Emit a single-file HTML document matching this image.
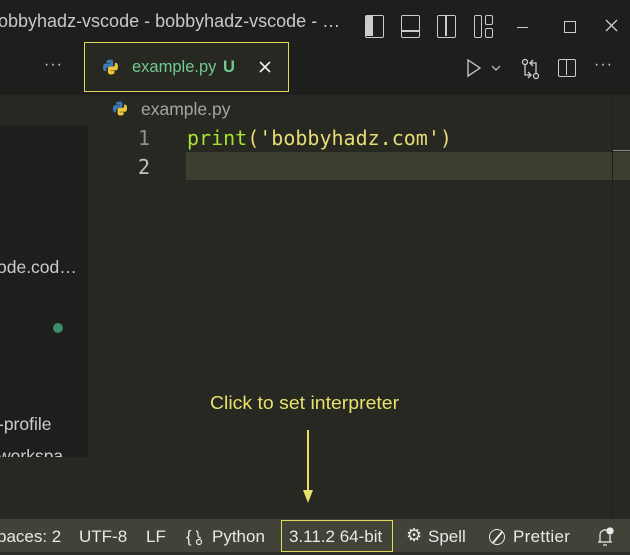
<!DOCTYPE html>
<html><head><style>
body{margin:0;width:630px;height:555px;background:#272822;position:relative;overflow:hidden;font-family:"Liberation Sans","DejaVu Sans",sans-serif;color:#ccc}
.a{position:absolute}
.mono{font-family:"DejaVu Sans Mono","Liberation Mono",monospace}
.ic{border:1.5px solid #ccc;border-radius:2px;box-sizing:border-box;position:absolute}
</style></head><body>
<div class="a" style="left:0;top:0;width:630px;height:95px;background:#1e1f1c"></div>
<div class="a" style="left:-2px;top:11px;font-size:18px;color:#c8c8c8;white-space:nowrap">obbyhadz-vscode - bobbyhadz-vscode - …</div>
<div class="ic" style="left:365px;top:15px;width:19px;height:23px"><div style="width:7px;height:20px;background:#ccc"></div></div>
<div class="ic" style="left:401px;top:15px;width:19px;height:23px"><div style="margin-top:14px;height:1.5px;background:#ccc"></div></div>
<div class="ic" style="left:437px;top:15px;width:19px;height:23px"><div style="margin-left:7px;width:1.5px;height:20px;background:#ccc"></div></div>
<div class="ic" style="left:474px;top:15px;width:8px;height:23px"></div>
<div class="ic" style="left:485px;top:15px;width:8px;height:10px"></div>
<div class="ic" style="left:485px;top:28px;width:8px;height:10px"></div>
<div class="a" style="left:517px;top:27px;width:11px;height:1.2px;background:#ccc"></div>
<div class="a" style="left:564px;top:21px;width:10px;height:10px;border:1.2px solid #ccc"></div>
<svg class="a" style="left:605px;top:19px" width="13" height="13" stroke="#ccc" stroke-width="1.3"><path d="M1 1L12 12M12 1L1 12"/></svg>
<div class="a" style="left:44px;top:56px;font-size:16px;color:#ccc;letter-spacing:1px">···</div>
<div class="a" style="left:84px;top:42px;width:203px;height:48px;border:1.5px solid #e2d85b;background:#272822"></div>
<svg class="a" style="left:102px;top:58px" width="17" height="18" viewBox="0 0 16 16"><path d="M7.8 1C4 1 4.3 2.6 4.3 2.6v1.7h3.6v.5H3C3 4.8 1 4.6 1 8.3s1.8 3.6 1.8 3.6h1.1v-1.7s-.1-1.8 1.8-1.8h3s1.7 0 1.7-1.7V2.8S10.7 1 7.8 1z" fill="#3d7ab4"/><path d="M8.2 15c3.8 0 3.5-1.6 3.5-1.6v-1.7H8.1v-.5H13c0 0 2 .2 2-3.5s-1.8-3.6-1.8-3.6h-1.1v1.7s.1 1.8-1.8 1.8h-3s-1.7 0-1.7 1.7v2.9S5.3 15 8.2 15z" fill="#f0c63c"/></svg>
<div class="a" style="left:132px;top:58px;font-size:16.5px;color:#73c991">example.py <b style="margin-left:2px">U</b></div>
<svg class="a" style="left:259px;top:61px" width="12" height="12" stroke="#eee" stroke-width="1.6"><path d="M1 1L11 11M11 1L1 11"/></svg>
<svg class="a" style="left:466px;top:58px" width="40" height="22"><path d="M2 2 L14 10 L2 18 Z" fill="none" stroke="#ccc" stroke-width="1.3"/><path d="M26 8l4 4 4-4" fill="none" stroke="#ccc" stroke-width="1.2"/></svg>
<svg class="a" style="left:520px;top:58px" width="22" height="22" fill="none" stroke="#ccc" stroke-width="1.3"><circle cx="5" cy="4" r="2.5"/><circle cx="16" cy="18" r="2.5"/><path d="M5 7v10h6M16 15V5h-6M8 14l3 3-3 3M13 2l-3 3 3 3"/></svg>
<div class="ic" style="left:558px;top:59px;width:18px;height:18px"><div style="margin-left:6.5px;width:1.5px;height:15px;background:#ccc"></div></div>
<div class="a" style="left:594px;top:56px;font-size:16px;color:#ccc;letter-spacing:1px">···</div>
<div class="a" style="left:0;top:125px;width:88px;height:332px;background:#1e1f1c"></div>
<div class="a" style="left:-3px;top:257px;font-size:17.5px;color:#ccc;white-space:nowrap">ode.cod…</div>
<div class="a" style="left:53px;top:323px;width:10px;height:10px;border-radius:50%;background:#3d8b6b"></div>
<div class="a" style="left:-2px;top:414px;font-size:17.5px;color:#ccc">-profile</div>
<div class="a" style="left:-2px;top:446px;font-size:17.5px;color:#ccc;height:11px;overflow:hidden">workspa</div>
<svg class="a" style="left:112px;top:100px" width="16" height="17" viewBox="0 0 16 16"><path d="M7.8 1C4 1 4.3 2.6 4.3 2.6v1.7h3.6v.5H3C3 4.8 1 4.6 1 8.3s1.8 3.6 1.8 3.6h1.1v-1.7s-.1-1.8 1.8-1.8h3s1.7 0 1.7-1.7V2.8S10.7 1 7.8 1z" fill="#3d7ab4"/><path d="M8.2 15c3.8 0 3.5-1.6 3.5-1.6v-1.7H8.1v-.5H13c0 0 2 .2 2-3.5s-1.8-3.6-1.8-3.6h-1.1v1.7s.1 1.8-1.8 1.8h-3s-1.7 0-1.7 1.7v2.9S5.3 15 8.2 15z" fill="#f0c63c"/></svg>
<div class="a" style="left:141px;top:99px;font-size:17.5px;color:#a6a6a0">example.py</div>
<div class="a" style="left:186px;top:152px;width:444px;height:28px;background:#3e3d32"></div>
<div class="a" style="left:613px;top:150px;width:17px;height:1px;background:#888"></div>
<div class="a mono" style="left:138px;top:126px;font-size:20px;color:#90908a">1</div>
<div class="a mono" style="left:138px;top:155px;font-size:20px;color:#c2c2bf">2</div>
<div class="a mono" style="left:187px;top:126px;font-size:20px;white-space:pre"><span style="color:#a6e22e">print</span><span style="color:#e6db74">('bobbyhadz.com')</span></div>
<div class="a" style="left:612px;top:95px;width:1px;height:424px;background:#1e1f1c"></div>
<div class="a" style="left:210px;top:393px;font-size:18px;color:#e6e16a;white-space:nowrap;transform:scaleX(1.08);transform-origin:left">Click to set interpreter</div>
<div class="a" style="left:307px;top:430px;width:1.5px;height:65px;background:#e6e16a"></div>
<svg class="a" style="left:303px;top:490px" width="10" height="14"><path d="M0 0 L5 13 L10 0 Z" fill="#e6e16a"/></svg>
<div class="a" style="left:0;top:519px;width:630px;height:36px;background:#414339"></div>
<div class="a" style="left:0;top:552px;width:630px;height:3px;background:#2d2e27"></div>
<div class="a" style="top:527px;left:-3px;font-size:17px;color:#e8e8e8;white-space:nowrap">paces: 2</div>
<div class="a" style="top:527px;left:79px;font-size:17px;color:#e8e8e8">UTF-8</div>
<div class="a" style="top:527px;left:146px;font-size:17px;color:#e8e8e8">LF</div>
<div class="a" style="top:527px;left:186px;font-size:17px;color:#e8e8e8">{</div>
<svg class="a" style="left:194px;top:530px" width="10" height="16" fill="none" stroke="#e8e8e8" stroke-width="1.2"><path d="M2 1c2 0 2 2 2 4s1 3 3 3"/><circle cx="5" cy="12" r="2.5"/></svg>
<div class="a" style="top:527px;left:212px;font-size:17px;color:#e8e8e8">Python</div>
<div class="a" style="left:281px;top:520px;width:110px;height:30px;border:1.5px solid #e2d85b"></div>
<div class="a" style="top:527px;left:289px;font-size:17px;color:#e8e8e8">3.11.2 64-bit</div>
<div class="a" style="top:525px;left:406px;font-size:18px;color:#e8e8e8">⚙</div>
<div class="a" style="top:527px;left:428px;font-size:17px;color:#e8e8e8">Spell</div>
<div class="a" style="top:529px;left:489px;width:14px;height:14px;border:1.5px solid #e8e8e8;border-radius:50%;overflow:hidden"><div style="position:absolute;left:6px;top:-2px;width:1.5px;height:20px;background:#e8e8e8;transform:rotate(40deg)"></div></div>
<div class="a" style="top:527px;left:513px;font-size:17px;color:#e8e8e8;letter-spacing:0.3px">Prettier</div>
<svg class="a" style="left:595px;top:526px" width="20" height="22" fill="none" stroke="#e8e8e8" stroke-width="1.3"><path d="M3 16h14M5 16V9a5 5 0 0 1 8-4M15 9v7M8 19h4"/><circle cx="15" cy="5" r="3" fill="#e8e8e8"/></svg>
</body></html>
